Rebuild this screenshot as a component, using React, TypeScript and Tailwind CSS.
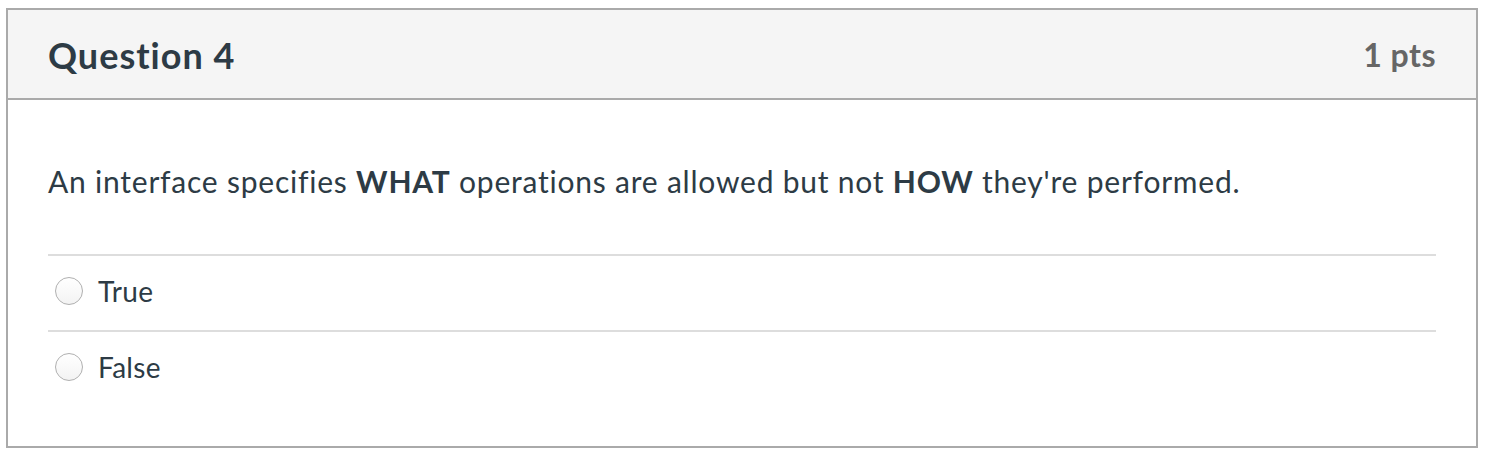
const options = ["True", "False"];

function Radio() {
  return (
    <span className="w-[28px] h-[28px] rounded-full border border-[#b0b0b0] bg-gradient-to-b from-white to-[#f3f3f3] shrink-0" />
  );
}

export default function App() {
  return (
    <div className="w-[1492px] h-[466px] bg-white pt-[8px] pl-[6px] font-['Lato','Noto_Sans',sans-serif] text-[#2d3b45] [font-variant-ligatures:none]">
      <div className="w-[1472px] h-[440px] border-2 border-[#aaaaaa]">
        <div className="h-[90px] bg-[#f5f5f5] border-b-2 border-[#aaaaaa] px-[40px] flex items-center justify-between">
          <h2 className="text-[36px] font-bold leading-none tracking-[1px] pt-[2px]">Question 4</h2>
          <span className="text-[32px] font-bold text-[#666666] leading-none tracking-[0.5px] pt-[2px]">1 pts</span>
        </div>
        <div className="px-[40px] pt-[60px]">
          <p className="text-[30px] leading-[42px] tracking-[0.78px]">
            An interface specifies <strong className="font-bold">WHAT</strong> operations are allowed but not{" "}
            <strong className="font-bold">HOW</strong> they're performed.
          </p>
          <div className="mt-[52px]">
            {options.map((o) => (
              <div key={o} className="border-t-2 border-[#dddddd] h-[76px] flex items-center pl-[7px] gap-[15px] pb-[4px]">
                <Radio />
                <span className="text-[28px] leading-none tracking-[0.3px]">{o}</span>
              </div>
            ))}
          </div>
        </div>
      </div>
    </div>
  );
}
